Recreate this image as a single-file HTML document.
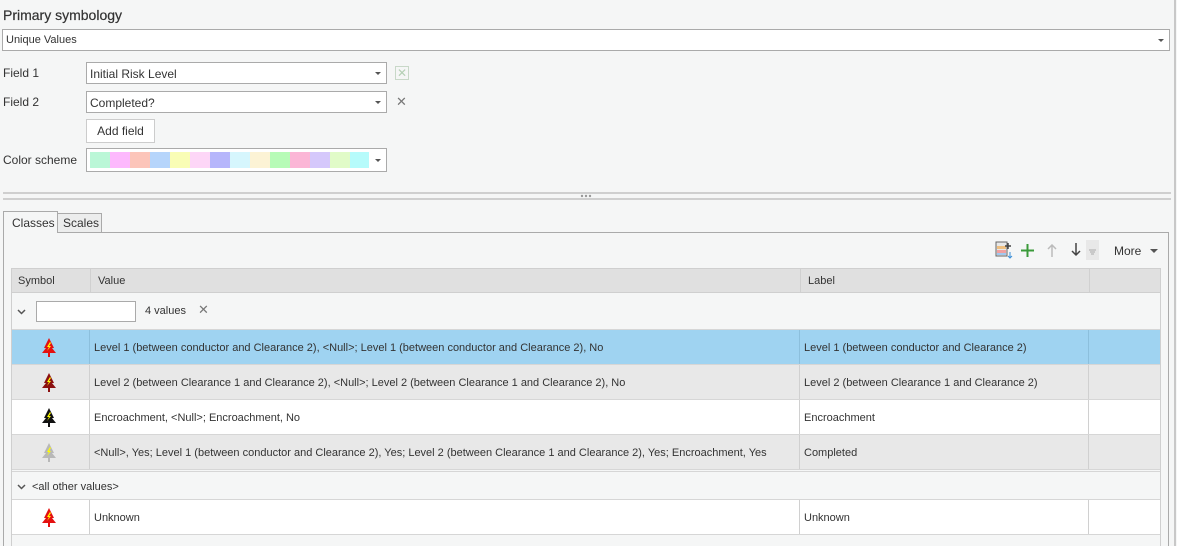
<!DOCTYPE html>
<html><head><style>
*{box-sizing:border-box;margin:0;padding:0}
html,body{width:1177px;height:546px;overflow:hidden}
body{background:#f5f6f6;font-family:"Liberation Sans",sans-serif;font-size:12px;color:#333;position:relative}
.a{position:absolute}
.box{position:absolute;background:#fff;border:1px solid #aaa}
.arr{position:absolute;width:0;height:0;border-left:3px solid transparent;border-right:3px solid transparent;border-top:3px solid #555}
.lbl{position:absolute;font-size:12px;color:#333}
.row{position:absolute;left:11px;width:1150px;border-bottom:1px solid #d6d6d6}
.c{position:absolute;top:0;height:100%;border-right:1px solid #d0d0d0}
.t{position:absolute;font-size:11px;color:#333}
</style></head><body>
<div class="a" style="left:1174px;top:0;width:2px;height:546px;background:#c8c8c8"></div>
<div class="a" style="left:3px;top:7px;font-size:14px;color:#333;-webkit-text-stroke:0.2px #333">Primary symbology</div>
<div class="box" style="left:2px;top:29px;width:1168px;height:22px"><span class="a" style="left:3px;top:4px;font-size:11px">Unique Values</span><div class="arr" style="right:5px;top:9px"></div></div>
<div class="lbl" style="left:3px;top:66px">Field 1</div>
<div class="box" style="left:86px;top:62px;width:301px;height:22px"><span class="a" style="left:3px;top:4px;font-size:12px">Initial Risk Level</span><div class="arr" style="right:5px;top:9px"></div></div>
<div class="a" style="left:395px;top:66px;width:14px;height:14px;border:1px solid #c8d8c8;color:#b5d0b5;font-size:12px;line-height:12px;text-align:center">✕</div>
<div class="lbl" style="left:3px;top:95px">Field 2</div>
<div class="box" style="left:86px;top:91px;width:301px;height:22px"><span class="a" style="left:3px;top:4px;font-size:12px">Completed?</span><div class="arr" style="right:5px;top:9px"></div></div>
<div class="a" style="left:396px;top:94px;color:#777;font-size:13px">✕</div>
<div class="box" style="left:86px;top:119px;width:69px;height:24px;border-color:#ccc;font-size:12px;text-align:center;line-height:22px">Add field</div>
<div class="lbl" style="left:3px;top:153px">Color scheme</div>
<div class="box" style="left:86px;top:148px;width:301px;height:24px"><div class="a" style="left:3px;top:3px;height:16px;width:279px;background:linear-gradient(90deg,#bbf7d7 0 20px,#fdb9fd 20px 40px,#fcc5ba 40px 60px,#b6d5fb 60px 80px,#f9fdb5 80px 100px,#fdd6f7 100px 120px,#b6b6fb 120px 140px,#d6f6fd 140px 160px,#fcf3d5 160px 180px,#b7fbb7 180px 200px,#fbb6d6 200px 220px,#d5c8fb 220px 240px,#e1fbc8 240px 260px,#b6fbfb 260px 279px)"></div><div class="arr" style="right:5px;top:10px"></div></div>
<div class="a" style="left:3px;top:192px;width:1168px;height:2px;background:#cfcfcf"></div>
<div class="a" style="left:3px;top:198px;width:1168px;height:2px;background:#cfcfcf"></div>
<svg class="a" style="left:580px;top:194px" width="18" height="4"><circle cx="2" cy="2" r="1.2" fill="#999"/><circle cx="6" cy="2" r="1.2" fill="#999"/><circle cx="10" cy="2" r="1.2" fill="#999"/></svg>
<div class="a" style="left:3px;top:232px;width:1166px;height:320px;border:1px solid #aaa;background:#f5f6f6"></div>
<div class="a" style="left:3px;top:211px;width:55px;height:22px;border:1px solid #aaa;border-bottom:none;background:#f5f6f6;font-size:12px;padding:4px 0 0 8px">Classes</div>
<div class="a" style="left:57px;top:213px;width:45px;height:20px;border:1px solid #aaa;background:#eceded;font-size:12px;padding:2px 0 0 5px">Scales</div>
<svg class="a" style="left:995px;top:241px" width="18" height="18"><rect x="1" y="1" width="11" height="14" fill="#e8e8e8" stroke="#666"/><rect x="2" y="5" width="9" height="3" fill="#f0c080"/><rect x="2" y="9" width="9" height="3" fill="#f0a0a0"/><rect x="2" y="12" width="9" height="2" fill="#a0c8f0"/><path d="M13 2v6M10 5h6" stroke="#444" stroke-width="1.5"/><path d="M15 11v6M13 15l2 2 2-2" stroke="#3a8fd8" fill="none"/></svg>
<svg class="a" style="left:1021px;top:244px" width="13" height="13"><path d="M6.5 0v13M0 6.5h13" stroke="#3a9a3a" stroke-width="2"/></svg>
<svg class="a" style="left:1047px;top:244px" width="10" height="13"><path d="M5 1v12M1 5l4-4 4 4" stroke="#bbb" stroke-width="1.5" fill="none"/></svg>
<svg class="a" style="left:1071px;top:243px" width="10" height="14"><path d="M5 0v12M1 8l4 4 4-4" stroke="#444" stroke-width="1.5" fill="none"/></svg>
<div class="a" style="left:1086px;top:240px;width:13px;height:20px;background:#e8e8e8"><svg class="a" style="left:3px;top:9px" width="7" height="6"><path d="M0 1h7M1 3h5M2 5h3" stroke="#aaa"/></svg></div>
<div class="a" style="left:1114px;top:244px;font-size:12px;color:#333">More</div>
<div class="arr" style="left:1150px;top:249px;border-width:4px 4px 0 4px"></div>
<div class="row" style="top:268px;height:25px;background:#e0e0e0;border:1px solid #cfcfcf"><div class="c" style="left:0;width:79px"></div><div class="c" style="left:79px;width:710px"></div><div class="c" style="left:789px;width:289px"></div><span class="t" style="left:6px;top:6px">Symbol</span><span class="t" style="left:86px;top:6px">Value</span><span class="t" style="left:796px;top:6px">Label</span></div>
<div class="row" style="top:293px;height:37px;background:#f5f6f6"><svg class="a" style="left:6px;top:16px" width="9" height="6"><path d="M1 1l3.5 3.5L8 1" stroke="#555" stroke-width="1.5" fill="none"/></svg><div class="a" style="left:25px;top:8px;width:100px;height:21px;background:#fff;border:1px solid #aaa"></div><span class="t" style="left:134px;top:12px">4 values</span><span class="a" style="left:187px;top:9px;color:#777;font-size:13px">✕</span></div>
<svg width="0" height="0" style="position:absolute"><defs><g id="tr"><path d="M8 0L3 10h2L1 15h6v4h2v-4h6l-4-5h2z"/><path d="M9 4L6 9h2l-2 4 4-5H8l2-3z" fill="#ff0"/></g></defs></svg>
<div class="row" style="top:330px;height:35px;background:#9fd3f1"><div class="c" style="left:0;width:79px;border-color:#8cbfdc"></div><div class="c" style="left:79px;width:710px;border-color:#8cbfdc"></div><div class="c" style="left:789px;width:289px;border-color:#8cbfdc"></div><svg class="a" style="left:30px;top:8px" width="17" height="20" fill="#e41010"><use href="#tr"/></svg><span class="t" style="left:83px;top:12px">Level 1 (between conductor and Clearance 2), &lt;Null&gt;; Level 1 (between conductor and Clearance 2), No</span><span class="t" style="left:793px;top:12px">Level 1 (between conductor and Clearance 2)</span></div>
<div class="row" style="top:365px;height:35px;background:#e8e8e8"><div class="c" style="left:0;width:79px"></div><div class="c" style="left:79px;width:710px"></div><div class="c" style="left:789px;width:289px"></div><svg class="a" style="left:30px;top:8px" width="17" height="20" fill="#8b1010"><use href="#tr"/></svg><span class="t" style="left:83px;top:12px">Level 2 (between Clearance 1 and Clearance 2), &lt;Null&gt;; Level 2 (between Clearance 1 and Clearance 2), No</span><span class="t" style="left:793px;top:12px">Level 2 (between Clearance 1 and Clearance 2)</span></div>
<div class="row" style="top:400px;height:35px;background:#fff"><div class="c" style="left:0;width:79px"></div><div class="c" style="left:79px;width:710px"></div><div class="c" style="left:789px;width:289px"></div><svg class="a" style="left:30px;top:8px" width="17" height="20" fill="#111"><use href="#tr"/></svg><span class="t" style="left:83px;top:12px">Encroachment, &lt;Null&gt;; Encroachment, No</span><span class="t" style="left:793px;top:12px">Encroachment</span></div>
<div class="row" style="top:435px;height:35px;background:#e8e8e8"><div class="c" style="left:0;width:79px"></div><div class="c" style="left:79px;width:710px"></div><div class="c" style="left:789px;width:289px"></div><svg class="a" style="left:30px;top:8px" width="17" height="20" fill="#b8b8b8"><use href="#tr"/></svg><span class="t" style="left:83px;top:12px">&lt;Null&gt;, Yes; Level 1 (between conductor and Clearance 2), Yes; Level 2 (between Clearance 1 and Clearance 2), Yes; Encroachment, Yes</span><span class="t" style="left:793px;top:12px">Completed</span></div>
<div class="row" style="top:471px;height:29px;background:#f5f6f6;border-top:1px solid #d6d6d6"><svg class="a" style="left:6px;top:12px" width="9" height="6"><path d="M1 1l3.5 3.5L8 1" stroke="#555" stroke-width="1.5" fill="none"/></svg><span class="t" style="left:21px;top:9px">&lt;all other values&gt;</span></div>
<div class="row" style="top:500px;height:35px;background:#fff"><div class="c" style="left:0;width:79px"></div><div class="c" style="left:79px;width:710px"></div><div class="c" style="left:789px;width:289px"></div><svg class="a" style="left:30px;top:8px" width="17" height="20" fill="#e41010"><use href="#tr"/></svg><span class="t" style="left:83px;top:12px">Unknown</span><span class="t" style="left:793px;top:12px">Unknown</span></div>
<div class="a" style="left:11px;top:268px;width:1px;height:280px;background:#cfcfcf"></div>
<div class="a" style="left:1160px;top:268px;width:1px;height:280px;background:#cfcfcf"></div>
</body></html>
